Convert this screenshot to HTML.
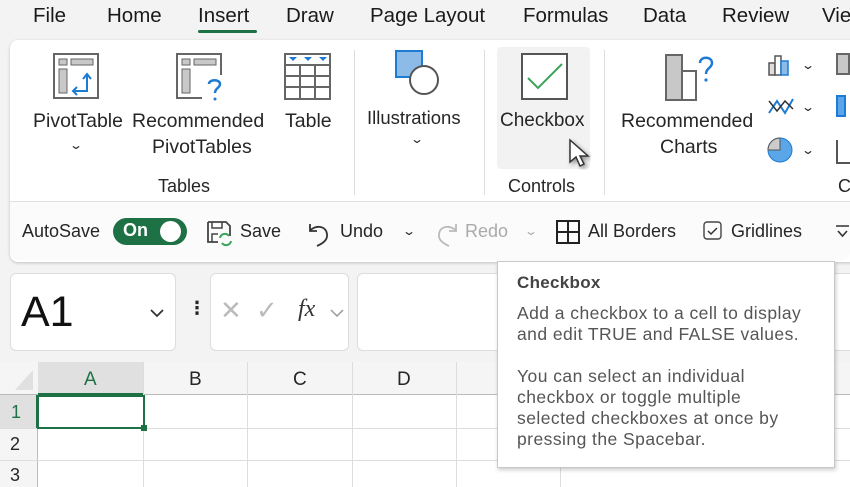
<!DOCTYPE html>
<html><head><style>
*{margin:0;padding:0;box-sizing:border-box}
body{width:850px;height:487px;overflow:hidden;background:#f3f3f3;font-family:"Liberation Sans","DejaVu Sans",sans-serif;color:#262626;position:relative}
.a{position:absolute;white-space:nowrap}
.tab{font-size:20.5px;top:4px;color:#1a1a1a}
.lbl{font-size:19.5px;color:#262626}
.q{font-size:18px;top:221px}
.ch{font-size:12px;transform:scaleX(1.4)}
svg{position:absolute}
</style></head><body>
<div class="a tab" style="left:33px">File</div>
<div class="a tab" style="left:107px">Home</div>
<div class="a tab" style="left:198px">Insert</div>
<div class="a" style="left:198px;top:30px;width:59px;height:3px;background:#1e7145;border-radius:2px"></div>
<div class="a tab" style="left:286px">Draw</div>
<div class="a tab" style="left:370px">Page Layout</div>
<div class="a tab" style="left:523px">Formulas</div>
<div class="a tab" style="left:643px">Data</div>
<div class="a tab" style="left:722px">Review</div>
<div class="a tab" style="left:822px">Vie</div>

<div class="a" style="left:10px;top:40px;width:850px;height:222px;background:#fff;border-radius:8px;box-shadow:0 1px 3px rgba(0,0,0,.2)"></div>
<div class="a" style="left:10px;top:201px;width:840px;height:1px;background:#e0e0e0"></div>
<div class="a" style="left:10px;top:202px;width:840px;height:58px;background:#fbfbfb;border-radius:0 0 8px 8px"></div>
<div class="a" style="left:354px;top:50px;width:1px;height:145px;background:#ddd"></div>
<div class="a" style="left:484px;top:50px;width:1px;height:145px;background:#ddd"></div>
<div class="a" style="left:604px;top:50px;width:1px;height:145px;background:#ddd"></div>
<div class="a" style="left:497px;top:47px;width:93px;height:122px;background:#f2f2f2;border-radius:4px"></div>

<svg style="left:53px;top:53px" width="48" height="48"><rect x="1" y="1" width="44" height="44" fill="#fff" stroke="#666" stroke-width="2"/><rect x="6" y="6" width="8" height="6" fill="#c8c8c8" stroke="#666"/><rect x="18" y="6" width="22" height="6" fill="#c8c8c8" stroke="#666"/><rect x="6" y="16" width="8" height="24" fill="#c8c8c8" stroke="#666"/><path d="M20 38h14V22M30 26l4-5 4 5M24 34l-4 4 4 4" fill="none" stroke="#1e7bd4" stroke-width="2"/></svg>
<svg style="left:176px;top:53px" width="52" height="48"><rect x="1" y="1" width="44" height="44" fill="#fff" stroke="#666" stroke-width="2"/><rect x="6" y="6" width="8" height="6" fill="#c8c8c8" stroke="#666"/><rect x="18" y="6" width="22" height="6" fill="#c8c8c8" stroke="#666"/><rect x="6" y="16" width="8" height="24" fill="#c8c8c8" stroke="#666"/><rect x="26" y="22" width="24" height="26" fill="#fff"/><path d="M33 31c0-5 11-5 11 0 0 4-5 4-5 9" fill="none" stroke="#1e7bd4" stroke-width="2.5"/><circle cx="39" cy="46" r="1.5" fill="#1e7bd4"/></svg>
<svg style="left:284px;top:53px" width="48" height="48"><rect x="1" y="1" width="45" height="45" fill="#fff" stroke="#666" stroke-width="2"/><path d="M1 12h45M1 23h45M1 34h45M16 12v34M31 12v34" stroke="#666" stroke-width="2"/><path d="M5 4h8l-4 4zM20 4h8l-4 4zM35 4h8l-4 4z" fill="#1e7bd4"/></svg>
<div class="a lbl" style="left:33px;top:110px">PivotTable</div>
<div class="a ch" style="left:71px;top:138px">⌄</div>
<div class="a lbl" style="left:132px;top:110px">Recommended</div>
<div class="a lbl" style="left:152px;top:136px">PivotTables</div>
<div class="a lbl" style="left:285px;top:110px">Table</div>
<div class="a lbl" style="left:158px;top:176px;font-size:18px">Tables</div>

<svg style="left:395px;top:50px" width="48" height="50"><rect x="1" y="1" width="26" height="26" fill="#8cbbe8" stroke="#1e7bd4" stroke-width="2"/><circle cx="29" cy="30" r="14" fill="#fff" stroke="#555" stroke-width="2"/></svg>
<div class="a lbl" style="left:367px;top:107px;font-size:18.5px">Illustrations</div>
<div class="a ch" style="left:412px;top:132px">⌄</div>

<svg style="left:521px;top:53px" width="48" height="48"><rect x="1" y="1" width="45" height="45" fill="#fff" stroke="#555" stroke-width="2"/><path d="M7 25l10 10 24-24" fill="none" stroke="#3aa55a" stroke-width="2"/></svg>
<div class="a lbl" style="left:500px;top:110px;font-size:19px">Checkbox</div>
<svg style="left:567px;top:138px" width="24" height="32"><path d="M3 2v22l6-5 4 9 4-2-4-8h8z" fill="#fff" stroke="#333" stroke-width="1.5" style="filter:drop-shadow(2px 2px 2px rgba(0,0,0,.4))"/></svg>
<div class="a lbl" style="left:508px;top:176px;font-size:18px">Controls</div>

<svg style="left:664px;top:53px" width="52" height="50"><rect x="2" y="2" width="16" height="45" fill="#c8c8c8" stroke="#666" stroke-width="2"/><rect x="18" y="18" width="14" height="29" fill="#fff" stroke="#666" stroke-width="2"/><path d="M36 10c0-7 12-7 12 0 0 5-6 5-6 11" fill="none" stroke="#1e7bd4" stroke-width="2.5"/><circle cx="42" cy="27" r="1.6" fill="#1e7bd4"/></svg>
<div class="a lbl" style="left:621px;top:110px">Recommended</div>
<div class="a lbl" style="left:660px;top:136px">Charts</div>
<svg style="left:767px;top:53px" width="30" height="26"><rect x="2" y="10" width="6" height="12" fill="#ddd" stroke="#555" stroke-width="1.5"/><rect x="8" y="3" width="6" height="19" fill="#fff" stroke="#555" stroke-width="1.5"/><rect x="14" y="8" width="7" height="14" fill="#8cbbe8" stroke="#1e7bd4" stroke-width="1.5"/></svg>
<div class="a ch" style="left:803px;top:58px">⌄</div>
<svg style="left:767px;top:95px" width="30" height="26"><path d="M2 18l8-12 8 12 8-14" fill="none" stroke="#1e7bd4" stroke-width="2"/><path d="M2 6l8 10 8-10 8 8" fill="none" stroke="#333" stroke-width="1.5"/></svg>
<div class="a ch" style="left:803px;top:100px">⌄</div>
<svg style="left:767px;top:136px" width="30" height="28"><circle cx="13" cy="14" r="12" fill="#5aa6e8" stroke="#1e7bd4"/><path d="M13 14V2A12 12 0 0 0 1 14z" fill="#ccc" stroke="#555"/></svg>
<div class="a ch" style="left:803px;top:143px">⌄</div>
<div class="a" style="left:836px;top:53px;width:14px;height:22px;background:#c8c8c8;border:2px solid #666"></div>
<div class="a" style="left:836px;top:95px;width:10px;height:22px;background:#5aa6e8;border:2px solid #1e7bd4"></div>
<div class="a" style="left:836px;top:140px;width:14px;height:24px;border-left:2px solid #555;border-bottom:2px solid #555"></div>
<div class="a lbl" style="left:838px;top:176px;font-size:18px">C</div>

<div class="a q" style="left:22px">AutoSave</div>
<div class="a" style="left:113px;top:218px;width:74px;height:27px;background:#1e7145;border-radius:14px"></div>
<div class="a" style="left:123px;top:220px;color:#fff;font-size:18px;font-weight:bold">On</div>
<div class="a" style="left:160px;top:221px;width:21px;height:21px;background:#fff;border-radius:50%"></div>
<svg style="left:206px;top:220px" width="28" height="28"><path d="M2 2h18l4 4v10M2 2v20h10" fill="none" stroke="#444" stroke-width="1.8"/><path d="M6 2v6h10V2M6 22v-8h6" fill="none" stroke="#444" stroke-width="1.5"/><path d="M14 18a5 5 0 0 1 9-2M25 21a5 5 0 0 1-9 2" fill="none" stroke="#3aa55a" stroke-width="2"/></svg>
<div class="a q" style="left:240px">Save</div>
<svg style="left:306px;top:220px" width="28" height="28"><path d="M4 4v7h7M4 11c4-6 16-6 17 3 1 7-6 10-10 12" fill="none" stroke="#333" stroke-width="1.8"/></svg>
<div class="a q" style="left:340px">Undo</div>
<div class="a ch" style="left:404px;top:224px">⌄</div>
<svg style="left:432px;top:220px" width="28" height="28"><path d="M24 4v7h-7M24 11c-4-6-16-6-17 3-1 7 6 10 10 12" fill="none" stroke="#bbb" stroke-width="1.8"/></svg>
<div class="a q" style="left:465px;color:#aaa">Redo</div>
<div class="a ch" style="left:526px;top:224px;color:#aaa">⌄</div>
<svg style="left:555px;top:219px" width="26" height="26"><rect x="2" y="2" width="22" height="22" fill="none" stroke="#222" stroke-width="2"/><path d="M13 2v22M2 13h22" stroke="#222" stroke-width="2"/></svg>
<div class="a q" style="left:588px">All Borders</div>
<svg style="left:703px;top:221px" width="20" height="20"><rect x="1" y="1" width="17" height="17" rx="3" fill="none" stroke="#444" stroke-width="1.4"/><path d="M5 10l3 3 6-6" fill="none" stroke="#333" stroke-width="1.5"/></svg>
<div class="a q" style="left:731px">Gridlines</div>
<svg style="left:835px;top:223px" width="15" height="18"><path d="M1 3h13M3 8l4.5 5 4.5-5" fill="none" stroke="#333" stroke-width="1.6"/></svg>

<div class="a" style="left:10px;top:273px;width:166px;height:78px;background:#fff;border:1px solid #ddd;border-radius:6px"></div>
<div class="a" style="left:21px;top:288px;font-size:43px;color:#111">A1</div>
<svg style="left:149px;top:307px" width="16" height="12"><path d="M2 3l6 6 6-6" fill="none" stroke="#333" stroke-width="1.8"/></svg>
<div class="a" style="left:188px;top:298px;font-size:18px;font-weight:bold">⋮</div>
<div class="a" style="left:210px;top:273px;width:139px;height:78px;background:#fff;border:1px solid #ddd;border-radius:6px"></div>
<div class="a" style="left:220px;top:295px;font-size:26px;color:#bbb">✕</div>
<div class="a" style="left:256px;top:295px;font-size:26px;color:#bbb">✓</div>
<div class="a" style="left:298px;top:296px;font-size:24px;font-style:italic;font-family:'Liberation Serif',serif;color:#333">fx</div>
<svg style="left:329px;top:307px" width="16" height="12"><path d="M2 3l6 6 6-6" fill="none" stroke="#999" stroke-width="1.5"/></svg>
<div class="a" style="left:357px;top:273px;width:520px;height:78px;background:#fff;border:1px solid #ddd;border-radius:6px"></div>

<div class="a" style="left:0;top:362px;width:850px;height:125px;background:#fff"></div>
<div class="a" style="left:0;top:362px;width:850px;height:33px;background:#f5f5f5;border-bottom:1px solid #bbb"></div>
<div class="a" style="left:0;top:395px;width:38px;height:92px;background:#f5f5f5;border-right:1px solid #bbb"></div>
<div class="a" style="left:38px;top:362px;width:105px;height:33px;background:#e0e0e0;border-bottom:2px solid #1e7145"></div>
<div class="a" style="left:0;top:395px;width:38px;height:33px;background:#e0e0e0;border-right:2px solid #1e7145"></div>
<svg style="left:15px;top:366px" width="20" height="26"><path d="M18 4v20H0z" fill="#e0e0e0"/></svg>
<div class="a" style="left:143px;top:362px;width:1px;height:125px;background:#ddd"></div>
<div class="a" style="left:247px;top:362px;width:1px;height:125px;background:#ddd"></div>
<div class="a" style="left:352px;top:362px;width:1px;height:125px;background:#ddd"></div>
<div class="a" style="left:456px;top:362px;width:1px;height:125px;background:#ddd"></div>
<div class="a" style="left:560px;top:362px;width:1px;height:125px;background:#ddd"></div>
<div class="a" style="left:0;top:428px;width:850px;height:1px;background:#ddd"></div>
<div class="a" style="left:0;top:460px;width:850px;height:1px;background:#ddd"></div>
<div class="a" style="left:84px;top:369px;font-size:19px;color:#1e7145">A</div>
<div class="a" style="left:189px;top:369px;font-size:19px">B</div>
<div class="a" style="left:293px;top:369px;font-size:19px">C</div>
<div class="a" style="left:397px;top:369px;font-size:19px">D</div>
<div class="a" style="left:11px;top:402px;font-size:18px;color:#1e7145">1</div>
<div class="a" style="left:10px;top:434px;font-size:18px">2</div>
<div class="a" style="left:10px;top:465px;font-size:18px">3</div>
<div class="a" style="left:37px;top:395px;width:108px;height:34px;border:2px solid #1e7145"></div>
<div class="a" style="left:141px;top:425px;width:6px;height:6px;background:#1e7145"></div>

<div class="a" style="left:497px;top:261px;width:338px;height:207px;background:#fff;border:1px solid #c8c8c8;box-shadow:1px 2px 4px rgba(0,0,0,.2)"></div>
<div class="a" style="left:517px;top:273px;font-size:17px;font-weight:bold;color:#444;letter-spacing:.3px">Checkbox</div>
<div class="a" style="left:517px;top:303px;font-size:17.5px;color:#555;line-height:21px;letter-spacing:.45px">Add a checkbox to a cell to display<br>and edit TRUE and FALSE values.<br><br>You can select an individual<br>checkbox or toggle multiple<br>selected checkboxes at once by<br>pressing the Spacebar.</div>
</body></html>
